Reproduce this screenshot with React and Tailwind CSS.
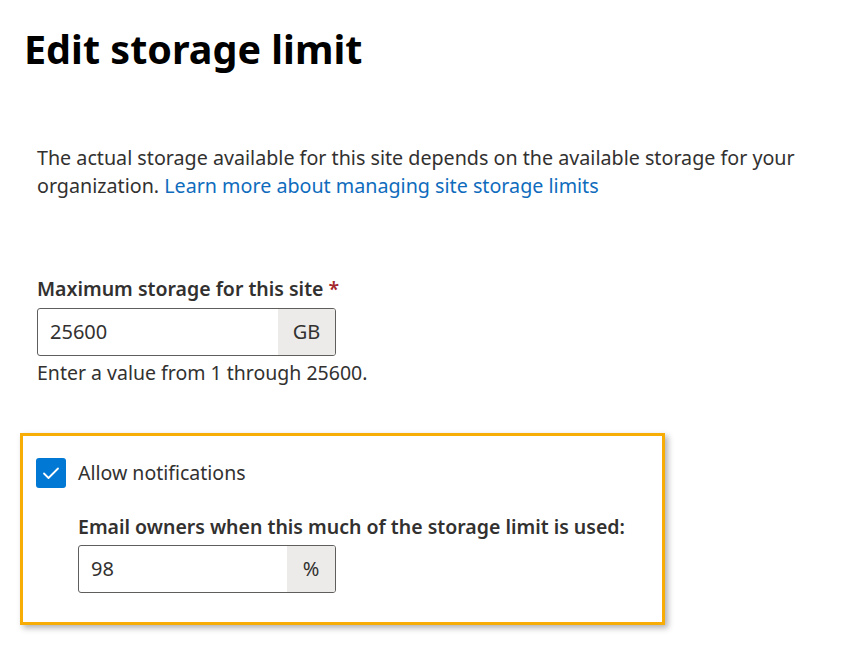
import React from 'react';

const FONT = { fontFamily: '"Noto Sans", "Open Sans", sans-serif' };

const SuffixInput = ({ value, suffix, width, suffixWidth }) => (
  <div className={`flex h-[48px] rounded-[3px] border border-[#605e5c] overflow-hidden bg-white ${width}`}>
    <div className="flex-1 flex items-center pl-[12px] text-[20px] text-[#323130]">{value}</div>
    <div className={`flex items-center justify-center bg-[#edebe9] text-[20px] text-[#323130] ${suffixWidth}`}>
      {suffix}
    </div>
  </div>
);

export default function App() {
  return (
    <div className="min-h-screen bg-white text-[#323130]" style={FONT}>
      <div className="pt-[21px] pl-[24px]">
        <h1 className="text-[39.5px] font-bold leading-[56px] text-black">Edit storage limit</h1>
      </div>

      <div className="pl-[37px] pr-[40px]">
        <p className="mt-[67px] text-[19.7px] leading-[28px]">
          The actual storage available for this site depends on the available storage for your organization.{' '}
          <a href="#" className="text-[#0f6cbd]">Learn more about managing site storage limits</a>
        </p>

        <div className="mt-[75px]">
          <label className="block text-[19.5px] font-semibold leading-[28px]">
            Maximum storage for this site <span className="text-[#a4262c]">*</span>
          </label>
          <div className="mt-[5px]">
            <SuffixInput value="25600" suffix="GB" width="w-[299px]" suffixWidth="w-[57px]" />
          </div>
          <p className="mt-[1px] text-[19.5px] leading-[32px]">Enter a value from 1 through 25600.</p>
        </div>
      </div>

      <div className="ml-[20px] mt-[44px] w-[645px] border-[3px] border-[#f7ac06] shadow-[3px_3px_6px_rgba(0,0,0,0.3)] pl-[13px] pt-[22px] pb-[29px]">
        <div className="flex items-center gap-[12px]">
          <div className="w-[30px] h-[30px] rounded-[3px] bg-[#0078d4]">
            <svg width="30" height="30" viewBox="0 0 30 30" fill="none">
              <path d="M8 15.5 L12.5 20 L22 10.5" stroke="white" strokeWidth="1.8" strokeLinecap="round" strokeLinejoin="round" />
            </svg>
          </div>
          <span className="text-[19.5px] leading-[30px]">Allow notifications</span>
        </div>
        <div className="pl-[42px] mt-[25px]">
          <label className="block text-[19.5px] font-semibold leading-[28px]">
            Email owners when this much of the storage limit is used:
          </label>
          <div className="mt-[4px]">
            <SuffixInput value="98" suffix="%" width="w-[258px]" suffixWidth="w-[48px]" />
          </div>
        </div>
      </div>
    </div>
  );
}
